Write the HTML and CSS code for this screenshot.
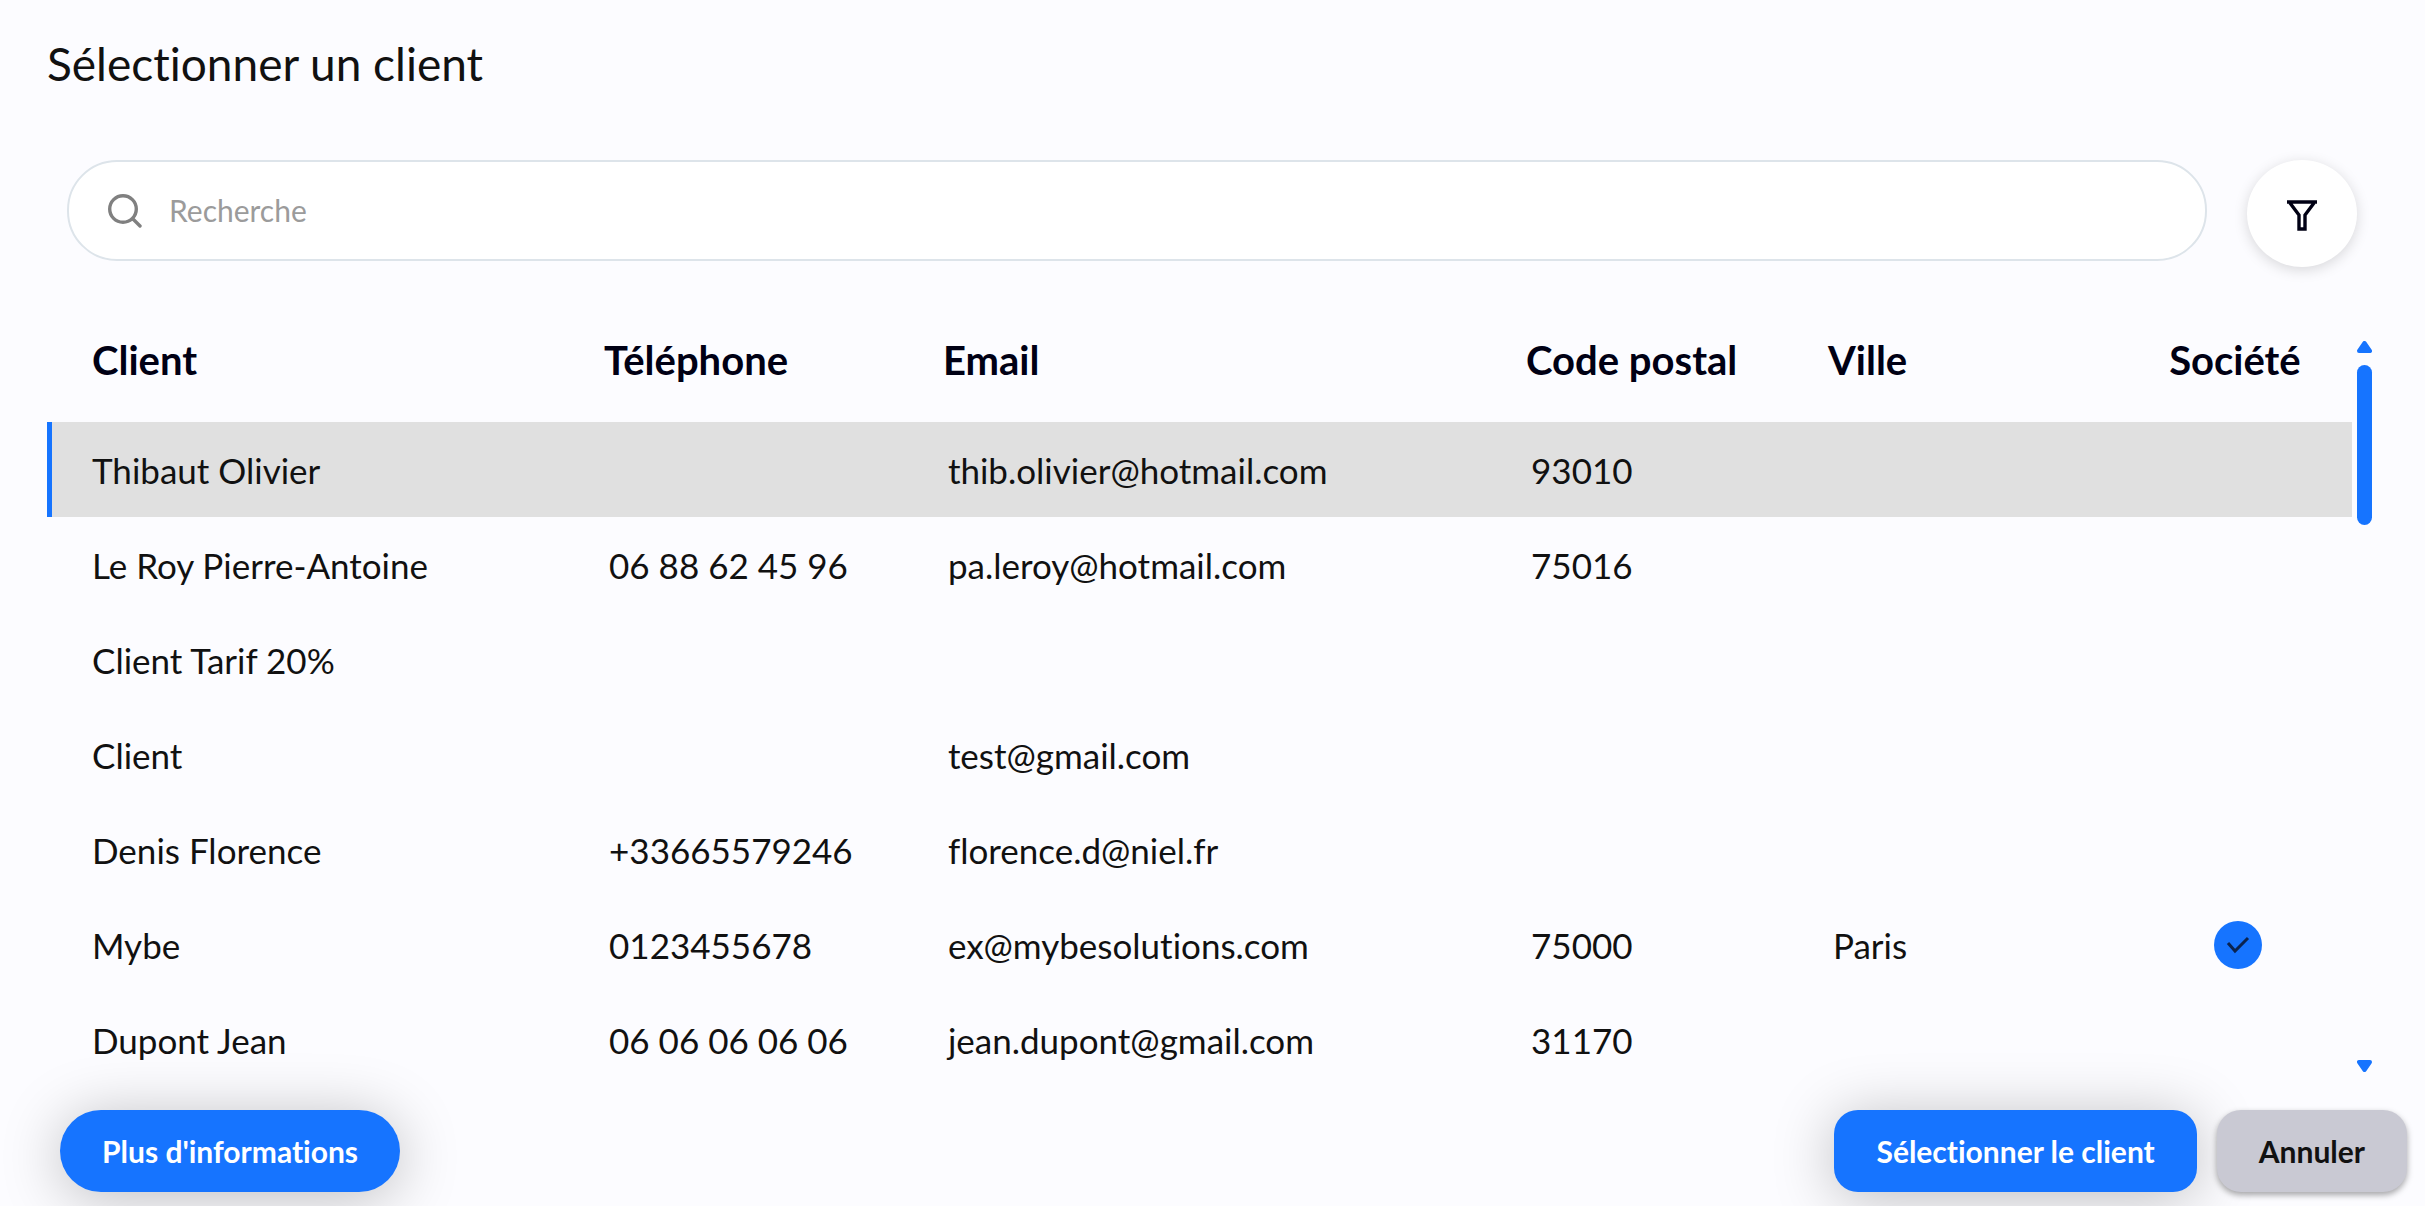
FILE: index.html
```html
<!DOCTYPE html>
<html lang="fr">
<head>
    <meta charset="UTF-8">
    <meta name="viewport" content="width=device-width, initial-scale=1.0">
    <title>Sélectionner un client</title>
    <link rel="stylesheet" href="styles.css">
</head>
<body>
    <main class="page">
        <h1 class="title">Sélectionner un client</h1>

        <div class="toolbar">
            <label class="search">
                <svg class="search-icon" viewBox="0 0 34 34" aria-hidden="true">
                    <circle cx="15" cy="15" r="13.300"/>
                    <path d="M25 25l7 7"/>
                </svg>
                <input type="text" placeholder="Recherche" aria-label="Recherche">
            </label>
            <button class="filter-button" type="button" aria-label="Filtrer">
                <svg viewBox="0 0 30 32" aria-hidden="true">
                    <path d="M0 2h30M3 3l9 12v14h6V15l9-12"/>
                </svg>
            </button>
        </div>

        <div class="list">
            <table class="clients">
                <colgroup>
                    <col class="col-client">
                    <col class="col-phone">
                    <col class="col-email">
                    <col class="col-zip">
                    <col class="col-city">
                    <col class="col-company">
                </colgroup>
                <thead>
                    <tr>
                        <th>Client</th>
                        <th>Téléphone</th>
                        <th>Email</th>
                        <th>Code postal</th>
                        <th>Ville</th>
                        <th>Société</th>
                    </tr>
                </thead>
                <tbody>
                    <tr class="selected">
                        <td>Thibaut Olivier</td>
                        <td></td>
                        <td>thib.olivier@hotmail.com</td>
                        <td>93010</td>
                        <td></td>
                        <td></td>
                    </tr>
                    <tr>
                        <td>Le Roy Pierre-Antoine</td>
                        <td>06 88 62 45 96</td>
                        <td>pa.leroy@hotmail.com</td>
                        <td>75016</td>
                        <td></td>
                        <td></td>
                    </tr>
                    <tr>
                        <td>Client Tarif 20%</td>
                        <td></td>
                        <td></td>
                        <td></td>
                        <td></td>
                        <td></td>
                    </tr>
                    <tr>
                        <td>Client</td>
                        <td></td>
                        <td>test@gmail.com</td>
                        <td></td>
                        <td></td>
                        <td></td>
                    </tr>
                    <tr>
                        <td>Denis Florence</td>
                        <td>+33665579246</td>
                        <td>florence.d@niel.fr</td>
                        <td></td>
                        <td></td>
                        <td></td>
                    </tr>
                    <tr>
                        <td>Mybe</td>
                        <td>0123455678</td>
                        <td>ex@mybesolutions.com</td>
                        <td>75000</td>
                        <td>Paris</td>
                        <td class="company">
                            <svg class="check" viewBox="0 0 48 48" role="img" aria-label="Oui">
                                <circle cx="24" cy="24" r="24"/>
                                <path d="M14 22l7 8 13-13"/>
                            </svg>
                        </td>
                    </tr>
                    <tr>
                        <td>Dupont Jean</td>
                        <td>06 06 06 06 06</td>
                        <td>jean.dupont@gmail.com</td>
                        <td>31170</td>
                        <td></td>
                        <td></td>
                    </tr>
                </tbody>
            </table>
            <div class="scrollbar" aria-hidden="true">
                <svg class="arrow" viewBox="0 0 15 12"><path d="M7.500 2L13 10H2z"/></svg>
                <div class="thumb"></div>
                <svg class="arrow arrow-down" viewBox="0 0 15 12"><path d="M2 2h11L7.500 10z"/></svg>
            </div>
        </div>

        <div class="actions">
            <button class="btn btn-primary btn-round" type="button">Plus d'informations</button>
            <div class="actions-right">
                <button class="btn btn-primary" type="button">Sélectionner le client</button>
                <button class="btn btn-cancel" type="button">Annuler</button>
            </div>
        </div>
    </main>
</body>
</html>
```
FILE: styles.css
```css
* {
    box-sizing: border-box;
}

body {
    margin: 0;
    background: #fcfcff;
    color: #111;
    font-family: Lato, "Noto Sans", sans-serif;
    font-variant-ligatures: none;
}

.page {
    display: flex;
    flex-direction: column;
    min-height: 100vh;
}

.title {
    margin: 0;
    padding: 34px 47px 0;
    font-size: 46px;
    font-weight: 400;
    line-height: 60px;
}

.toolbar {
    display: flex;
    align-items: flex-start;
    gap: 40px;
    padding: 66px 68px 0 67px;
}

.search {
    flex: 1;
    display: flex;
    align-items: center;
    gap: 27px;
    height: 101px;
    padding: 0 39px;
    background: #fff;
    border: 2px solid #dde4ea;
    border-radius: 50px;
}

.search-icon {
    width: 34px;
    height: 34px;
    fill: none;
    stroke: #808080;
    stroke-width: 3.4;
    stroke-linecap: round;
}

.search input {
    flex: 1;
    padding: 0 0 2px;
    border: none;
    outline: none;
    background: none;
    color: #111;
    font-family: inherit;
    font-size: 30px;
}

.search input::placeholder {
    color: #9b9b9b;
}

.filter-button {
    display: flex;
    align-items: center;
    justify-content: center;
    width: 110px;
    height: 107px;
    padding: 4px 0 0;
    border: none;
    border-radius: 50%;
    background: #fff;
    box-shadow: 0 3px 14px rgba(0, 0, 0, 0.15);
    cursor: pointer;
}

.filter-button svg {
    width: 30px;
    height: 32px;
    fill: none;
    stroke: #000014;
    stroke-width: 3.4;
}

.list {
    flex: 1;
    display: flex;
    gap: 5px;
    padding: 63px 53px 0 47px;
}

.clients {
    flex: 1;
    table-layout: fixed;
    border-collapse: collapse;
}

.col-client { width: 23.3%; }
.col-phone { width: 14.7%; }
.col-email { width: 25.3%; }
.col-zip { width: 13.1%; }
.col-city { width: 14.8%; }
.col-company { width: 8.8%; }

.clients th {
    height: 92px;
    padding: 0 0 32px 20px;
    color: #000014;
    font-size: 40px;
    font-weight: 700;
    text-align: left;
    white-space: nowrap;
}

.clients td {
    height: 95px;
    padding: 0 0 0 25px;
    font-size: 35px;
    white-space: nowrap;
}

.clients th:first-child,
.clients td:first-child {
    padding-left: 45px;
}

.selected {
    background: #e0e0e0;
    box-shadow: inset 5px 0 #1674ff;
}

.clients .company {
    padding: 0 26px 2px 0;
    text-align: center;
}

.check {
    display: inline-block;
    width: 48px;
    height: 48px;
    vertical-align: middle;
    fill: #1674ff;
}

.check path {
    fill: none;
    stroke: #0a2350;
    stroke-width: 3;
}

.scrollbar {
    display: flex;
    flex-direction: column;
    width: 15px;
    padding: 11px 0 15px;
}

.arrow {
    width: 15px;
    height: 12px;
    fill: #1674ff;
    stroke: #1674ff;
    stroke-width: 4;
    stroke-linejoin: round;
}

.arrow-down {
    margin-top: auto;
}

.thumb {
    height: 160px;
    margin-top: 12px;
    border-radius: 8px;
    background: #1674ff;
}

.actions {
    display: flex;
    justify-content: space-between;
    padding: 23px 18px 14px 60px;
}

.actions-right {
    display: flex;
    gap: 20px;
}

.btn {
    height: 82px;
    padding: 0 42px;
    border: none;
    border-radius: 24px;
    font-family: inherit;
    font-size: 30px;
    font-weight: 700;
    font-variant-ligatures: none;
    cursor: pointer;
}

.btn-primary {
    background: #1674ff;
    color: #fff;
    box-shadow: 0 6px 60px rgba(0, 0, 0, 0.25);
}

.btn-round {
    border-radius: 41px;
}

.btn-cancel {
    position: relative;
    background: #c9c9d3;
    color: #111;
    box-shadow: 0 3px 6px rgba(0, 0, 0, 0.35);
}
```
